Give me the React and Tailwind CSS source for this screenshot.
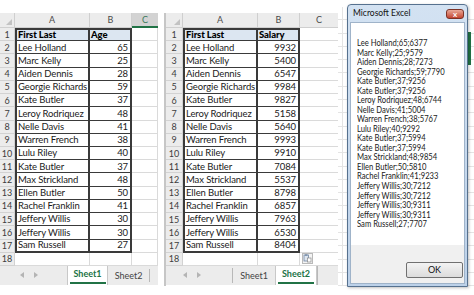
import React from 'react';

const people = [
  ['Lee Holland', 65, 9932],
  ['Marc Kelly', 25, 5400],
  ['Aiden Dennis', 28, 6547],
  ['Georgie Richards', 59, 9984],
  ['Kate Butler', 37, 9827],
  ['Leroy Rodriquez', 48, 5158],
  ['Nelle Davis', 41, 5640],
  ['Warren French', 38, 9993],
  ['Lulu Riley', 40, 9910],
  ['Kate Butler', 37, 7084],
  ['Max Strickland', 48, 5537],
  ['Ellen Butler', 50, 8798],
  ['Rachel Franklin', 41, 6857],
  ['Jeffery Willis', 30, 7963],
  ['Jeffery Willis', 30, 6530],
  ['Sam Russell', 27, 8404],
];

const output = [
  'Lee Holland;65;6377',
  'Marc Kelly;25;9579',
  'Aiden Dennis;28;7273',
  'Georgie Richards;59;7790',
  'Kate Butler;37;9256',
  'Kate Butler;37;9256',
  'Leroy Rodriquez;48;6744',
  'Nelle Davis;41;5004',
  'Warren French;38;5767',
  'Lulu Riley;40;9292',
  'Kate Butler;37;5994',
  'Kate Butler;37;5994',
  'Max Strickland;48;9854',
  'Ellen Butler;50;5810',
  'Rachel Franklin;41;9233',
  'Jeffery Willis;30;7212',
  'Jeffery Willis;30;7212',
  'Jeffery Willis;30;9311',
  'Jeffery Willis;30;9311',
  'Sam Russell;27;7707',
];

const Arrows = () => (
  <div className="flex items-center gap-[10px]">
    <svg width="4" height="6" viewBox="0 0 4 6"><path d="M4 0 L0 3 L4 6 Z" fill="#b4b4b4" /></svg>
    <svg width="4" height="6" viewBox="0 0 4 6"><path d="M0 0 L4 3 L0 6 Z" fill="#b4b4b4" /></svg>
  </div>
);

const PasteIcon = () => (
  <svg width="11" height="11" viewBox="0 0 11 11">
    <rect x="0.5" y="0.5" width="10" height="10" fill="#f4f4f4" stroke="#b9b9b9" />
    <rect x="2" y="2" width="4.5" height="6" fill="#dfe7f0" stroke="#6f86a3" strokeWidth="0.8" />
    <rect x="3" y="1.4" width="2.5" height="1.3" fill="#6f86a3" />
    <rect x="5.5" y="5" width="3.5" height="4" fill="#fff" stroke="#8a8a8a" strokeWidth="0.7" />
  </svg>
);

// one Excel window, left or middle
const Sheet = ({ title, field, left }) => {
  const rowHead = left ? 'w-[15px]' : 'w-[17px]';
  const colC = left ? 'w-[26px]' : 'w-[38px]';
  const rows = Array.from({ length: 18 }, (_, i) => i + 1);

  return (
    <div className={left ? 'flex flex-col w-[158px] shrink-0' : 'flex flex-col w-[174px] shrink-0 ml-[6px] border-l-2 border-[#c6c6c6]'}>
      {/* column headers */}
      <div className="flex h-[15px] text-[9px] text-[#4a4a4a] bg-[#ececec]">
        <div className={`${rowHead} shrink-0 border-r border-b border-[#cfcfcf] flex items-end justify-end p-[2px]`}>
          <svg width="6" height="6" viewBox="0 0 6 6"><path d="M6 0 L6 6 L0 6 Z" fill="#c2c2c2" /></svg>
        </div>
        <div className="w-[75px] shrink-0 border-r border-b border-[#cfcfcf] flex items-center justify-center">A</div>
        <div className="w-[42px] shrink-0 border-r border-b border-[#cfcfcf] flex items-center justify-center">B</div>
        {left ? (
          <div className={`${colC} shrink-0 bg-[#d3d3d3] border-b-2 border-[#217346] flex items-center justify-center text-[#3b7a5a]`}>C</div>
        ) : (
          <div className={`${colC} shrink-0 border-b border-[#cfcfcf] flex items-center justify-center`}>C</div>
        )}
      </div>

      {rows.map((r) => {
        const inData = r <= 17;
        const person = people[r - 2];
        const top = r === 1 ? 'border-t-2' : '';
        const bottom = r === 17 ? 'border-b-2' : 'border-b';
        return (
          <div key={r} className="flex h-[13.22px] text-[9.5px] tracking-[-0.1px] leading-none">
            <div className={`${rowHead} shrink-0 bg-[#ececec] border-r border-b border-[#d2d2d2] flex items-center justify-center text-[9px] text-[#3c3c3c] tracking-normal`}>
              {r}
            </div>
            {inData ? (
              <>
                <div className={`w-[75px] shrink-0 border-l-2 border-r-2 ${top} ${bottom} border-[#3a3a3a] flex items-center pl-[1px] whitespace-nowrap overflow-hidden ${r === 1 ? 'bg-[#dce6f1] font-black text-black' : 'text-[#1a1a1a]'}`}>
                  {r === 1 ? 'First Last' : person[0]}
                </div>
                <div className={`w-[42px] shrink-0 border-r-2 ${top} ${bottom} border-[#3a3a3a] flex items-center whitespace-nowrap ${r === 1 ? 'bg-[#dce6f1] font-black text-black pl-[1px]' : 'justify-end pr-[2px] text-[#1a1a1a]'}`}>
                  {r === 1 ? title : person[field]}
                </div>
              </>
            ) : (
              <>
                <div className="w-[75px] shrink-0 border-r border-b border-[#dadada]" />
                <div className="w-[42px] shrink-0 border-r border-b border-[#dadada]" />
              </>
            )}
            <div className={`${colC} shrink-0 border-b border-[#dadada] ${left ? 'border-r' : ''} flex items-start pl-[2px]`}>
              {!left && r === 18 && <PasteIcon />}
            </div>
          </div>
        );
      })}

      {/* sheet tabs */}
      {left ? (
        <div className="flex h-[19px] bg-[#ececec] text-[9px]">
          <div className="w-[67px] shrink-0 flex items-center pl-[20px]"><Arrows /></div>
          <div className="w-[41px] shrink-0 bg-white border-x border-[#c8c8c8] flex flex-col items-center justify-end pb-[1px]">
            <span className="font-bold text-[#217346] leading-none">Sheet1</span>
            <div className="mt-[4px] h-[2px] w-[36px] bg-[#217346]" />
          </div>
          <div className="w-[42px] shrink-0 border-r border-[#b8b8b8] my-[3px] flex items-center justify-center text-[#444]">Sheet2</div>
          <div className="flex-1" />
        </div>
      ) : (
        <div className="flex h-[19px] bg-[#ececec] text-[9px]">
          <div className="w-[49px] shrink-0 flex items-center pl-[17px]"><Arrows /></div>
          <div className="w-[18px] shrink-0 border-r border-[#b8b8b8] my-[2px]" />
          <div className="w-[42px] shrink-0 flex items-center justify-center text-[#444]">Sheet1</div>
          <div className="w-[42px] shrink-0 bg-white border-x border-[#c8c8c8] flex flex-col items-center justify-end pb-[1px]">
            <span className="font-bold text-[#217346] leading-none">Sheet2</span>
            <div className="mt-[4px] h-[2px] w-[36px] bg-[#217346]" />
          </div>
          <div className="flex-1 border-l border-[#b8b8b8]" />
        </div>
      )}
    </div>
  );
};

const MessageBox = () => (
  <div className="absolute left-[347px] top-[4px] w-[121px] h-[283px] border border-[#56718f] rounded-t-[4px] bg-linear-to-b from-[#d3e2f2] to-[#bcd1e9] flex flex-col px-[2px] pb-[2px] shadow-[1px_1px_3px_rgba(0,0,0,0.25)]">
    <div className="h-[17px] shrink-0 flex items-center justify-between pl-[3px]">
      <span className="text-[8.5px] text-[#111]">Microsoft Excel</span>
      <div className="w-[18px] h-[10px] mr-[1px] rounded-[3px] border border-[#7b3226] bg-linear-to-b from-[#e8a898] to-[#c2432f] flex items-center justify-center text-white text-[8px] font-bold leading-none">
        x
      </div>
    </div>
    <div className="flex-1 bg-white flex flex-col border border-[#9fb3c9]">
      <div className="flex-1 pt-[15px] pl-[6px]">
        {output.map((line, i) => (
          <div key={i} className="text-[9px] leading-[9.53px] text-[#1a1a1a] whitespace-nowrap scale-x-[0.85] origin-left">
            {line}
          </div>
        ))}
      </div>
      <div className="h-[38px] shrink-0 bg-[#f0f0f0] flex justify-end pt-[17px] pr-[1px]">
        <div className="w-[57px] h-[16px] border border-[#707070] rounded-[2px] bg-linear-to-b from-[#f3f3f3] to-[#dcdcdc] flex items-center justify-center text-[9px] text-[#111]">
          OK
        </div>
      </div>
    </div>
  </div>
);

export default function App() {
  return (
    <div className="relative w-[474px] h-[295px] overflow-hidden bg-white font-['Lato','Liberation_Sans',sans-serif]">
      <div className="flex pt-[13px]">
        <Sheet title="Age" field={1} left />
        <Sheet title="Salary" field={2} />
        {/* sheet behind the message box */}
        <div className="flex-1 relative -mt-[13px] flex flex-col pt-[7px]">
          {Array.from({ length: 21 }, (_, i) => (
            <div key={i} className="h-[13.3px] shrink-0 border-b border-[#e4e4e4] flex">
              <div className="w-[5px] border-r border-[#e4e4e4]" />
            </div>
          ))}
          <div className="absolute left-[130px] top-[32px] w-[3px] h-[33px] bg-[#217346]" />
        </div>
      </div>
      <MessageBox />
    </div>
  );
}
